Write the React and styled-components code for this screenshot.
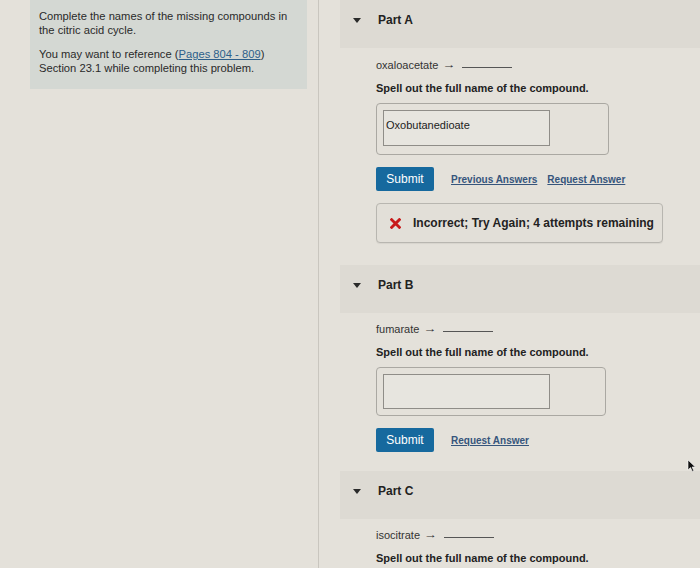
import React from 'react';
import styled, { createGlobalStyle } from 'styled-components';

const GlobalStyle = createGlobalStyle`
  html, body {
    margin: 0;
    padding: 0;
    background: #e4e1da;
    font-family: "Liberation Sans", Arial, sans-serif;
    color: #222;
  }
`;

const Page = styled.div`
  position: relative;
  display: grid;
  grid-template-columns: 319px 1fr;
  width: 700px;
  height: 568px;
  overflow: hidden;
  background: #e4e1da;
`;

const Sidebar = styled.aside`
  padding-left: 30px;
  padding-right: 11px;
  border-right: 1px solid #c9c6bf;
`;

const InfoBox = styled.div`
  background: #d4d8d3;
  padding: 9px 9px 14px 9px;
  font-size: 11.2px;
  line-height: 14px;
  color: #2a2a2a;

  p {
    margin: 0;
  }
  p + p {
    margin-top: 10px;
  }
`;

const RefLink = styled.span`
  color: #2d5f8a;
  text-decoration: underline;
`;

const Main = styled.main`
  padding-left: 21px;
`;

const PartHeader = styled.div`
  display: flex;
  align-items: center;
  height: 14px;
  padding: 13px 0 21px 13px;
  background: #dddad3;
  font-size: 12px;
  line-height: 14px;
  font-weight: bold;
  color: #222;
`;

const Caret = styled.span`
  width: 0;
  height: 0;
  border-left: 4px solid transparent;
  border-right: 4px solid transparent;
  border-top: 5px solid #2a2a2a;
  margin-right: 17px;
`;

const PartBody = styled.div`
  padding: ${p => p.$top}px 0 0 36px;
  margin-bottom: ${p => p.$bottom || 0}px;
`;

const Prompt = styled.div`
  display: flex;
  align-items: baseline;
  font-size: 11px;
  line-height: 14px;
  color: #333;
`;

const Arrow = styled.span`
  font-size: 13px;
  line-height: 14px;
  margin-left: 4px;
  transform: scaleY(0.8);
`;

const Blank = styled.span`
  display: inline-block;
  width: 50px;
  margin-left: 7px;
  border-bottom: 1px solid #555;
  transform: translateY(-1px);
`;

const Instruction = styled.div`
  margin-top: 9px;
  font-size: 11px;
  line-height: 14px;
  font-weight: bold;
  color: #222;
`;

const AnswerBox = styled.div`
  width: ${p => p.$width}px;
  height: ${p => p.$height}px;
  margin-top: 8px;
  box-sizing: border-box;
  padding: 6px;
  border: 1px solid #aaa8a2;
  border-radius: 4px;
`;

const AnswerInput = styled.div`
  width: 167px;
  height: ${p => p.$height}px;
  box-sizing: border-box;
  padding: 7px 2px;
  border: 1px solid #8f8d88;
  background: #e7e5df;
  font-size: 11px;
  line-height: 14px;
  color: #222;
`;

const Actions = styled.div`
  display: flex;
  align-items: center;
  margin-top: 12px;
`;

const SubmitButton = styled.button`
  width: 58px;
  height: 24px;
  padding: 0;
  border: none;
  border-radius: 2px;
  background: #16699e;
  color: #fff;
  font-family: inherit;
  font-size: 12px;
  font-weight: 500;
  margin-right: 17px;
`;

const LinkText = styled.span`
  font-size: 10px;
  font-weight: bold;
  color: #36557c;
  text-decoration: underline;
  margin-right: 10px;
`;

const Feedback = styled.div`
  display: flex;
  align-items: center;
  width: 287px;
  height: 40px;
  margin-top: 12px;
  box-sizing: border-box;
  padding-left: 13px;
  border: 1px solid #b8b6b0;
  border-radius: 4px;
  background: #e2dfd8;
  box-shadow: 0 1px 1px rgba(0, 0, 0, 0.06);
  font-size: 12px;
  font-weight: bold;
  color: #222;
`;

const Cross = styled.svg`
  width: 11px;
  height: 11px;
  margin-right: 12px;
`;

const Cursor = styled.svg`
  position: absolute;
  left: 687px;
  top: 459px;
  width: 9px;
  height: 13px;
`;

const parts = [
  {
    label: 'Part A',
    compound: 'oxaloacetate',
    answer: 'Oxobutanedioate',
    links: ['Previous Answers', 'Request Answer'],
    feedback: 'Incorrect; Try Again; 4 attempts remaining',
    box: [233, 52, 36],
    top: 10,
    bottom: 22,
  },
  {
    label: 'Part B',
    compound: 'fumarate',
    answer: '',
    links: ['Request Answer'],
    box: [230, 49, 35],
    top: 9,
    bottom: 19,
  },
  {
    label: 'Part C',
    compound: 'isocitrate',
    short: true,
    top: 9,
  },
];

const Part = ({ part }) => (
  <section>
    <PartHeader>
      <Caret />
      <span>{part.label}</span>
    </PartHeader>
    <PartBody $top={part.top} $bottom={part.bottom}>
      <Prompt>
        {part.compound}
        <Arrow>→</Arrow>
        <Blank />
      </Prompt>
      <Instruction>Spell out the full name of the compound.</Instruction>
      {!part.short && (
        <>
          <AnswerBox $width={part.box[0]} $height={part.box[1]}>
            <AnswerInput $height={part.box[2]}>{part.answer}</AnswerInput>
          </AnswerBox>
          <Actions>
            <SubmitButton>Submit</SubmitButton>
            {part.links.map(l => (
              <LinkText key={l}>{l}</LinkText>
            ))}
          </Actions>
          {part.feedback && (
            <Feedback>
              <Cross viewBox="0 0 10 10">
                <path d="M1.5 1.5 L8.5 8.5 M8.5 1.5 L1.5 8.5" stroke="#c81a1a" strokeWidth="2.6" strokeLinecap="square" />
              </Cross>
              {part.feedback}
            </Feedback>
          )}
        </>
      )}
    </PartBody>
  </section>
);

export default function App() {
  return (
    <>
      <GlobalStyle />
      <Page>
        <Sidebar>
          <InfoBox>
            <p>Complete the names of the missing compounds in the citric acid cycle.</p>
            <p>
              You may want to reference (<RefLink>Pages 804 - 809</RefLink>) Section 23.1 while completing this problem.
            </p>
          </InfoBox>
        </Sidebar>
        <Main>
          {parts.map(p => (
            <Part key={p.label} part={p} />
          ))}
        </Main>
        <Cursor viewBox="0 0 9 13">
          <path d="M1 1 L1 11 L3.5 8.6 L5.3 12.4 L6.8 11.7 L5.1 8 L8.3 8 Z" fill="#111" stroke="#fff" strokeWidth="0.6" />
        </Cursor>
      </Page>
    </>
  );
}
